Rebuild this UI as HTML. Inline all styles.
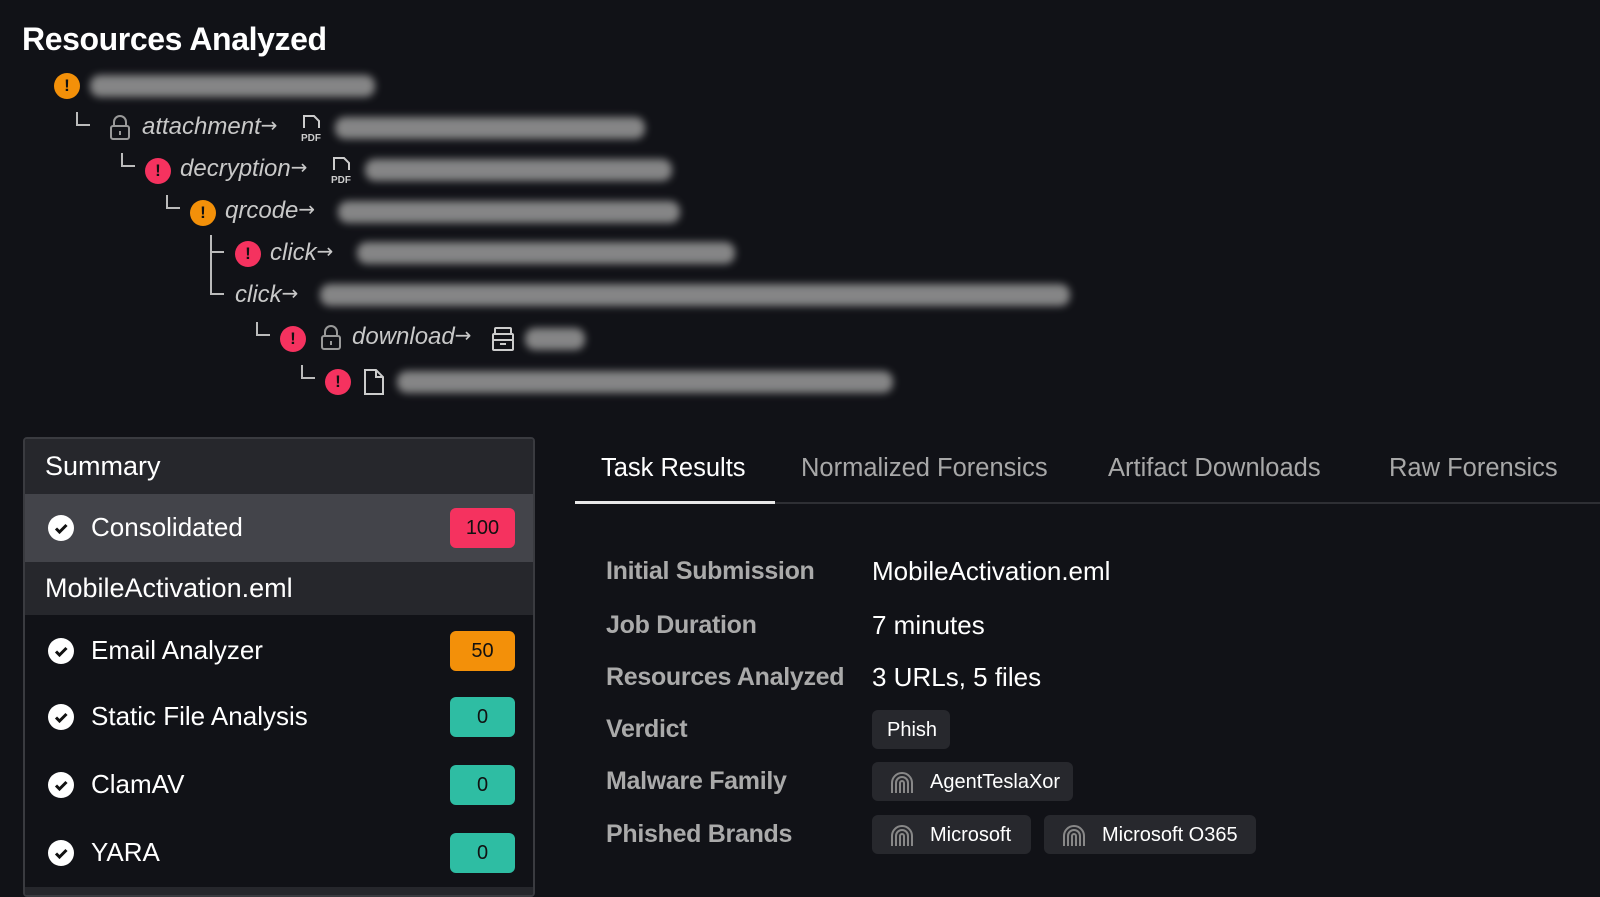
<!DOCTYPE html>
<html><head><meta charset="utf-8"><style>
*{margin:0;padding:0;box-sizing:border-box}
body{width:1600px;height:892px;background:#111217;overflow:hidden;position:relative;font-family:"Liberation Sans",sans-serif;color:#fff}
.a{position:absolute;white-space:nowrap}
h1{position:absolute;left:22px;top:21px;font-size:32px;font-weight:bold;letter-spacing:-0.4px;color:#fff}
.bad{position:absolute;width:26px;height:26px;border-radius:50%;color:#111;font-weight:bold;font-size:17px;text-align:center;line-height:26px}
.or{background:#f39009}.rd{background:#f5325f}
.it{position:absolute;font-style:italic;font-size:24px;color:#c8c8c8;white-space:nowrap}
.it b{font-style:normal;font-weight:normal;font-family:"DejaVu Sans",sans-serif;font-size:20px;position:relative;top:-2px}
.bl{position:absolute;height:22px;border-radius:10px;background:#9a9a9a;filter:blur(4px);opacity:.85}
.cor{position:absolute;width:14px;height:14px;border-left:2px solid #bbb;border-bottom:2px solid #bbb}
.panel{position:absolute;left:23px;top:437px;width:512px;height:460px;border:2px solid #3a3b40;border-radius:4px;background:#111217;overflow:hidden}
.row{position:relative;width:100%}
.hd{background:#26272c;font-size:27px;padding-left:20px}
.chk{position:absolute;left:23px;width:26px;height:26px;border-radius:50%;background:#fff}
.lbl{position:absolute;left:66px;font-size:26px;color:#fff;white-space:nowrap}
.sc{position:absolute;left:425px;width:65px;height:40px;border-radius:6px;color:#111;font-size:20px;text-align:center;line-height:40px}
.tab{position:absolute;top:454px;font-size:25.5px;color:#a8a8a8;white-space:nowrap}
.k{position:absolute;left:606px;font-size:25px;font-weight:bold;color:#aaa;white-space:nowrap;letter-spacing:-0.3px}
.v{position:absolute;left:872px;font-size:26px;color:#fff;white-space:nowrap}
.chip{position:absolute;height:39px;background:#27282d;border-radius:6px;font-size:20px;color:#fff;line-height:40px;white-space:nowrap}
.chip svg{position:absolute;left:18px;top:9px}
</style></head><body>
<h1>Resources Analyzed</h1>

<div class="bad or" style="left:54px;top:73px">!</div>
<div class="bl" style="left:90px;top:75px;width:285px"></div>

<div class="cor" style="left:76px;top:112px"></div>
<svg class="a" style="left:109px;top:115px" width="22" height="26" viewBox="0 0 22 26"><path d="M5 11V7a6 6 0 0 1 12 0v4" fill="none" stroke="#999" stroke-width="2"/><rect x="2" y="11" width="18" height="13" rx="2" fill="none" stroke="#999" stroke-width="2"/><rect x="10" y="16" width="2" height="4" fill="#999"/></svg>
<div class="it" style="left:142px;top:113px">attachment<b>→</b></div>
<svg class="a" style="left:300px;top:114px" width="24" height="28" viewBox="0 0 24 28"><path d="M4 14V2h10l5 5v7" fill="none" stroke="#ccc" stroke-width="2"/><text x="1" y="27" font-size="10" font-weight="bold" fill="#ccc" font-family="Liberation Sans">PDF</text></svg>
<div class="bl" style="left:335px;top:117px;width:310px"></div>

<div class="cor" style="left:121px;top:153px"></div>
<div class="bad rd" style="left:145px;top:158px">!</div>
<div class="it" style="left:180px;top:155px">decryption<b>→</b></div>
<svg class="a" style="left:330px;top:156px" width="24" height="28" viewBox="0 0 24 28"><path d="M4 14V2h10l5 5v7" fill="none" stroke="#ccc" stroke-width="2"/><text x="1" y="27" font-size="10" font-weight="bold" fill="#ccc" font-family="Liberation Sans">PDF</text></svg>
<div class="bl" style="left:365px;top:159px;width:307px"></div>

<div class="cor" style="left:166px;top:195px"></div>
<div class="bad or" style="left:190px;top:200px">!</div>
<div class="it" style="left:225px;top:197px">qrcode<b>→</b></div>
<div class="bl" style="left:338px;top:201px;width:342px"></div>

<div class="a" style="left:210px;top:235px;width:2px;height:60px;background:#bbb"></div>
<div class="a" style="left:210px;top:251px;width:14px;height:2px;background:#bbb"></div>
<div class="a" style="left:210px;top:293px;width:14px;height:2px;background:#bbb"></div>
<div class="bad rd" style="left:235px;top:241px">!</div>
<div class="it" style="left:270px;top:239px">click<b>→</b></div>
<div class="bl" style="left:357px;top:242px;width:378px"></div>
<div class="it" style="left:235px;top:281px">click<b>→</b></div>
<div class="bl" style="left:320px;top:284px;width:750px"></div>

<div class="cor" style="left:256px;top:322px"></div>
<div class="bad rd" style="left:280px;top:326px">!</div>
<svg class="a" style="left:320px;top:325px" width="22" height="26" viewBox="0 0 22 26"><path d="M5 11V7a6 6 0 0 1 12 0v4" fill="none" stroke="#999" stroke-width="2"/><rect x="2" y="11" width="18" height="13" rx="2" fill="none" stroke="#999" stroke-width="2"/><rect x="10" y="16" width="2" height="4" fill="#999"/></svg>
<div class="it" style="left:352px;top:323px">download<b>→</b></div>
<svg class="a" style="left:490px;top:326px" width="26" height="26" viewBox="0 0 26 26"><rect x="5" y="2" width="16" height="6" rx="1" fill="none" stroke="#ccc" stroke-width="2"/><rect x="3" y="8" width="20" height="6" rx="1" fill="none" stroke="#ccc" stroke-width="2"/><rect x="3" y="14" width="20" height="10" rx="1" fill="none" stroke="#ccc" stroke-width="2"/><path d="M10 18h6" stroke="#ccc" stroke-width="2"/></svg>
<div class="bl" style="left:525px;top:328px;width:60px"></div>

<div class="cor" style="left:301px;top:365px"></div>
<div class="bad rd" style="left:325px;top:369px">!</div>
<svg class="a" style="left:363px;top:368px" width="22" height="28" viewBox="0 0 22 28"><path d="M2 2h11l7 7v17H2z" fill="none" stroke="#ccc" stroke-width="2"/><path d="M13 2v7h7" fill="none" stroke="#ccc" stroke-width="2"/></svg>
<div class="bl" style="left:397px;top:371px;width:496px"></div>

<div class="panel">
  <div class="row hd" style="height:55px;line-height:55px">Summary</div>
  <div class="row" style="height:68px;background:#43444a">
    <div class="chk" style="top:21px"><svg width="26" height="26"><path d="M8 13.5l3.5 3.5 7-7" fill="none" stroke="#111" stroke-width="3"/></svg></div>
    <div class="lbl" style="top:18px">Consolidated</div>
    <div class="sc" style="top:14px;background:#f5325f">100</div>
  </div>
  <div class="row hd" style="height:53px;line-height:53px">MobileActivation.eml</div>
  <div class="row" style="height:68px">
    <div class="chk" style="top:23px"><svg width="26" height="26"><path d="M8 13.5l3.5 3.5 7-7" fill="none" stroke="#111" stroke-width="3"/></svg></div>
    <div class="lbl" style="top:20px">Email Analyzer</div>
    <div class="sc" style="top:16px;background:#f39009">50</div>
  </div>
  <div class="row" style="height:68px">
    <div class="chk" style="top:21px"><svg width="26" height="26"><path d="M8 13.5l3.5 3.5 7-7" fill="none" stroke="#111" stroke-width="3"/></svg></div>
    <div class="lbl" style="top:18px">Static File Analysis</div>
    <div class="sc" style="top:14px;background:#2ebda3">0</div>
  </div>
  <div class="row" style="height:68px">
    <div class="chk" style="top:21px"><svg width="26" height="26"><path d="M8 13.5l3.5 3.5 7-7" fill="none" stroke="#111" stroke-width="3"/></svg></div>
    <div class="lbl" style="top:18px">ClamAV</div>
    <div class="sc" style="top:14px;background:#2ebda3">0</div>
  </div>
  <div class="row" style="height:68px">
    <div class="chk" style="top:21px"><svg width="26" height="26"><path d="M8 13.5l3.5 3.5 7-7" fill="none" stroke="#111" stroke-width="3"/></svg></div>
    <div class="lbl" style="top:18px">YARA</div>
    <div class="sc" style="top:14px;background:#2ebda3">0</div>
  </div>
  <div class="row" style="height:20px;background:#26272c"></div>
</div>

<div class="tab" style="left:601px;color:#fff">Task Results</div>
<div class="tab" style="left:801px">Normalized Forensics</div>
<div class="tab" style="left:1108px">Artifact Downloads</div>
<div class="tab" style="left:1389px">Raw Forensics</div>
<div class="a" style="left:575px;top:502px;width:1025px;height:2px;background:#2e2f34"></div>
<div class="a" style="left:575px;top:501px;width:200px;height:3px;background:#e8e8e8"></div>

<div class="k" style="top:557px">Initial Submission</div><div class="v" style="top:556px">MobileActivation.eml</div>
<div class="k" style="top:611px">Job Duration</div><div class="v" style="top:610px">7 minutes</div>
<div class="k" style="top:663px">Resources Analyzed</div><div class="v" style="top:662px">3 URLs, 5 files</div>
<div class="k" style="top:715px">Verdict</div>
<div class="k" style="top:767px">Malware Family</div>
<div class="k" style="top:820px">Phished Brands</div>

<div class="chip" style="left:872px;top:710px;width:78px;padding-left:15px">Phish</div>
<div class="chip" style="left:872px;top:762px;width:201px;padding-left:58px"><svg width="24" height="22" viewBox="0 0 24 22"><path d="M2 22V12a10 10 0 0 1 20 0v10M6 22V12a6 6 0 0 1 12 0v10M10 22V12a2 2 0 0 1 4 0v10" fill="none" stroke="#888" stroke-width="2"/></svg>AgentTeslaXor</div>
<div class="chip" style="left:872px;top:815px;width:159px;padding-left:58px"><svg width="24" height="22" viewBox="0 0 24 22"><path d="M2 22V12a10 10 0 0 1 20 0v10M6 22V12a6 6 0 0 1 12 0v10M10 22V12a2 2 0 0 1 4 0v10" fill="none" stroke="#888" stroke-width="2"/></svg>Microsoft</div>
<div class="chip" style="left:1044px;top:815px;width:212px;padding-left:58px"><svg width="24" height="22" viewBox="0 0 24 22"><path d="M2 22V12a10 10 0 0 1 20 0v10M6 22V12a6 6 0 0 1 12 0v10M10 22V12a2 2 0 0 1 4 0v10" fill="none" stroke="#888" stroke-width="2"/></svg>Microsoft O365</div>
</body></html>
